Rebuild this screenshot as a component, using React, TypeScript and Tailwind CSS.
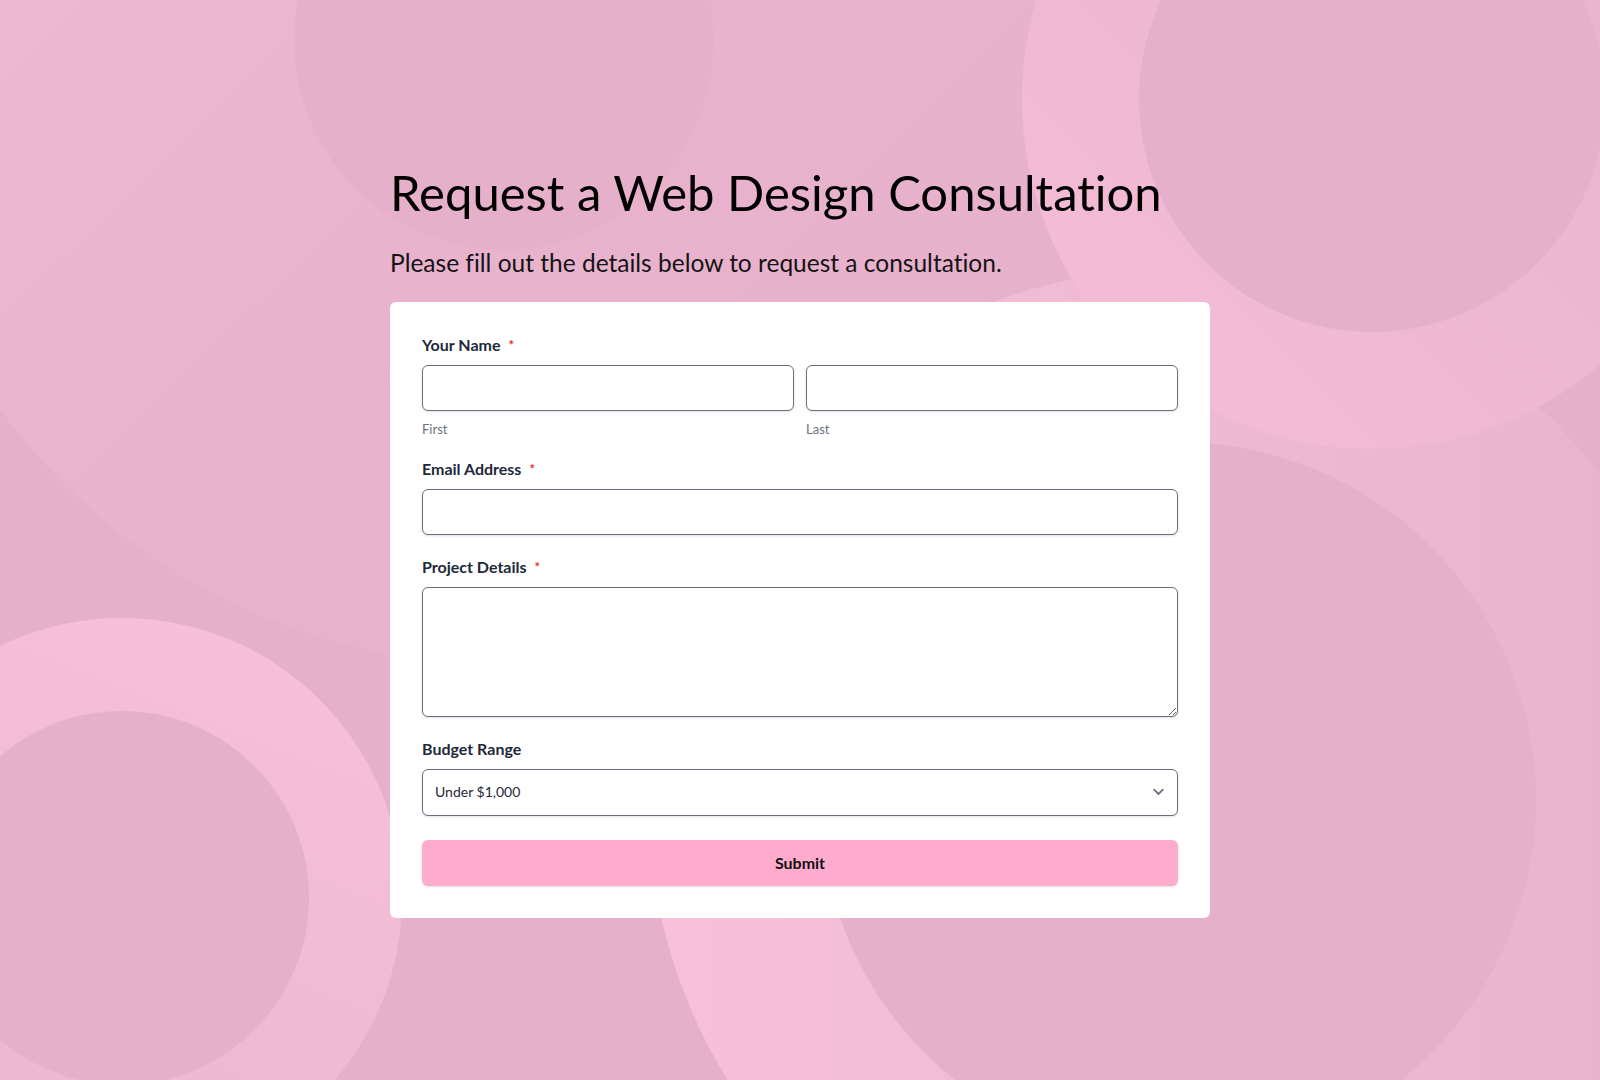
import React from 'react';

const Background: React.FC = () => (
  <svg
    className="absolute inset-0 h-full w-full"
    viewBox="0 0 1600 1080"
    preserveAspectRatio="xMidYMid slice"
    aria-hidden="true"
  >
    <defs>
      <linearGradient id="ringTopLeft" x1="0" y1="0" x2="1" y2="1">
        <stop offset="0" stopColor="#f3bdd5" />
        <stop offset="0.55" stopColor="#e9b3ce" />
        <stop offset="1" stopColor="#e6b0cb" />
      </linearGradient>
      <linearGradient id="ringTopRight" x1="0" y1="1" x2="1" y2="0">
        <stop offset="0" stopColor="#f6bed7" />
        <stop offset="0.6" stopColor="#ecb5d0" />
        <stop offset="1" stopColor="#e8b2cd" />
      </linearGradient>
      <linearGradient id="ringBottomLeft" x1="0.7" y1="0" x2="0.3" y2="1">
        <stop offset="0" stopColor="#f7c0d8" />
        <stop offset="1" stopColor="#edb6d0" />
      </linearGradient>
      <linearGradient id="ringBottomRight" x1="0" y1="0" x2="1" y2="0">
        <stop offset="0" stopColor="#f8c1d9" />
        <stop offset="0.5" stopColor="#f0b9d3" />
        <stop offset="1" stopColor="#e8b2cd" />
      </linearGradient>
    </defs>

    {/* top left ring */}
    <circle cx="504" cy="40" r="625" fill="url(#ringTopLeft)" />
    <circle cx="504" cy="40" r="210" fill="#e6b0cb" />

    {/* bottom right ring */}
    <circle cx="1180" cy="800" r="532" fill="url(#ringBottomRight)" />
    <circle cx="1178" cy="800" r="358" fill="#e6b0cb" />

    {/* top right ring */}
    <circle cx="1372" cy="99" r="350" fill="url(#ringTopRight)" />
    <circle cx="1372" cy="99" r="233" fill="#e6b0cb" />

    {/* bottom left ring */}
    <circle cx="122" cy="898" r="280" fill="url(#ringBottomLeft)" />
    <circle cx="122" cy="898" r="187" fill="#e6b0cb" />
  </svg>
);

const Label: React.FC<{ text: string; required?: boolean }> = ({ text, required }) => (
  <label className="mb-2 flex h-6 items-center text-base leading-6 font-bold text-[#1e293b]">
    {text}
    {required && <span className="ml-2 mt-0.5 text-[13px] leading-none text-[#e0301e]">*</span>}
  </label>
);

const inputClass =
  'block h-[46px] w-full rounded-md border border-[#676e7e] bg-white px-3 text-sm text-[#1f2937] shadow-sm outline-none';

export default function App() {
  return (
    <div className="relative min-h-screen overflow-hidden bg-[#e6b0cb] font-[Lato,sans-serif] [font-variant-ligatures:none]">
      <Background />

      <div className="relative mx-auto w-[820px] pt-[163px] pb-10">
        <h1 className="text-[49px] leading-[1.2] font-normal text-black">
          Request a Web Design Consultation
        </h1>
        <p className="mt-[26px] text-[24.5px] leading-[29px] text-[#141414]">
          Please fill out the details below to request a consultation.
        </p>

        <form className="mt-[25px] rounded-md bg-white px-8 pt-[31px] pb-8">
          {/* Name */}
          <div>
            <Label text="Your Name" required />
            <div className="grid grid-cols-2 gap-3">
              <div>
                <input type="text" className={inputClass} />
                <div className="mt-2.5 text-[13px] leading-4 text-[#6b7280]">First</div>
              </div>
              <div>
                <input type="text" className={inputClass} />
                <div className="mt-2.5 text-[13px] leading-4 text-[#6b7280]">Last</div>
              </div>
            </div>
          </div>

          {/* Email */}
          <div className="mt-5">
            <Label text="Email Address" required />
            <input type="email" className={inputClass} />
          </div>

          {/* Project details */}
          <div className="mt-5">
            <Label text="Project Details" required />
            <textarea className="block h-[130px] w-full rounded-md border border-[#676e7e] bg-white px-3 py-2 text-sm text-[#1f2937] shadow-sm outline-none" />
          </div>

          {/* Budget */}
          <div className="mt-5">
            <Label text="Budget Range" />
            <div className="relative">
              <select
                className="block h-[47px] w-full appearance-none rounded-md border border-[#676e7e] bg-white px-3 pr-10 text-sm text-[#1f2937] shadow-sm outline-none"
                defaultValue="under-1000"
              >
                <option value="under-1000">Under $1,000</option>
                <option value="1000-5000">$1,000 - $5,000</option>
                <option value="5000-10000">$5,000 - $10,000</option>
                <option value="over-10000">Over $10,000</option>
              </select>
              <svg
                className="pointer-events-none absolute top-1/2 right-[14px] h-[7px] w-[11px] -translate-y-1/2"
                viewBox="0 0 11 7"
                fill="none"
              >
                <path d="M1.2 1.2 5.5 5.5 9.8 1.2" stroke="#6b7280" strokeWidth="1.8" strokeLinecap="round" strokeLinejoin="round" />
              </svg>
            </div>
          </div>

          <button
            type="button"
            className="mt-[24px] flex h-[46px] w-full items-center justify-center rounded-md bg-[#ffabce] text-base font-bold text-[#111111] shadow-sm"
          >
            Submit
          </button>
        </form>
      </div>
    </div>
  );
}
